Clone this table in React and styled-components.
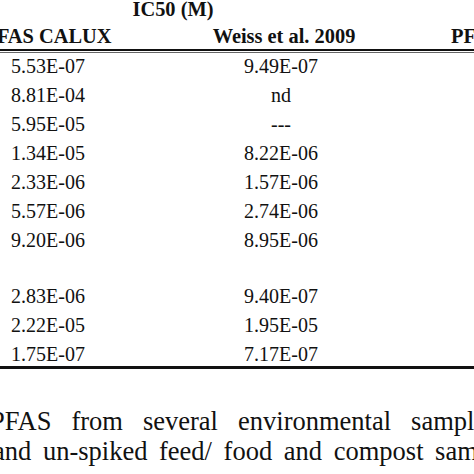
import React from "react"
import styled, { createGlobalStyle } from "styled-components"

const Global = createGlobalStyle`
  html, body {
    margin: 0;
    padding: 0;
    background: #fff;
  }
`

const Page = styled.div`
  width: 474px;
  height: 474px;
  overflow: hidden;
  background: #fff;
  color: #111;
  font-family: "Liberation Serif", "Times New Roman", serif;
`

const Table = styled.div`
  display: flex;
  flex-direction: column;
  width: 640px;
  margin-left: -60px;
`

const Row = styled.div`
  display: grid;
  grid-template-columns: 216px 250px 1fr;
  box-sizing: border-box;
  height: ${p => p.$h || 29}px;
  padding-top: ${p => p.$top || 0}px;
  line-height: ${p => p.$lh || 29}px;
  font-size: 20px;
  white-space: nowrap;
`

const Title = styled.div`
  grid-column: 1 / 3;
  text-align: center;
  font-weight: bold;
  font-size: 20.4px;
`

const HeadCell = styled.div`
  font-weight: bold;
  font-size: 20.4px;
  text-align: ${p => p.$align || "center"};
  padding-left: ${p => p.$pad || 0}px;
`

const Cell = styled.div`
  text-align: center;
`

const DoubleRule = styled.div`
  height: 1px;
  border-top: 2px solid #111;
  border-bottom: 1px solid #666;
`

const BottomRule = styled.div`
  height: 0;
  border-top: 3px solid #111;
`

const Caption = styled.div`
  margin-top: 37px;
  font-size: 26.5px;
  line-height: 30px;
`

const Line = styled.div`
  white-space: nowrap;
  word-spacing: ${p => p.$ws}px;
  margin-left: ${p => p.$shift}px;
`

const rows = [
  ["5.53E-07", "9.49E-07"],
  ["8.81E-04", "nd"],
  ["5.95E-05", "---"],
  ["1.34E-05", "8.22E-06"],
  ["2.33E-06", "1.57E-06"],
  ["5.57E-06", "2.74E-06"],
  ["9.20E-06", "8.95E-06"],
]

const rows2 = [
  ["2.83E-06", "9.40E-07"],
  ["2.22E-05", "1.95E-05"],
  ["1.75E-07", "7.17E-07"],
]

export default function App() {
  return (
    <Page>
      <Global />
      <Table>
        <Row $h={18} $lh={18}>
          <Title>IC50 (M)</Title>
        </Row>
        <Row $h={31} $lh={26} $top={5}>
          <HeadCell>PFAS CALUX</HeadCell>
          <HeadCell $pad={6}>Weiss et al. 2009</HeadCell>
          <HeadCell $align="left" $pad={45}>PFAS CALUX</HeadCell>
        </Row>
        <DoubleRule />
        {rows.map((r, i) => (
          <Row key={i} $h={i === 0 ? 28 : 29} $lh={i === 0 ? 27 : 29}>
            <Cell>{r[0]}</Cell>
            <Cell>{r[1]}</Cell>
          </Row>
        ))}
        <Row $h={27} />
        {rows2.map((r, i) => (
          <Row key={i} $h={i === rows2.length - 1 ? 26 : 29}>
            <Cell>{r[0]}</Cell>
            <Cell>{r[1]}</Cell>
          </Row>
        ))}
        <BottomRule />
      </Table>
      <Caption>
        <Line $ws={13.4} $shift={-10}>PFAS from several environmental samples</Line>
        <Line $ws={5} $shift={-7}>and un-spiked feed/ food and compost samples</Line>
      </Caption>
    </Page>
  )
}
